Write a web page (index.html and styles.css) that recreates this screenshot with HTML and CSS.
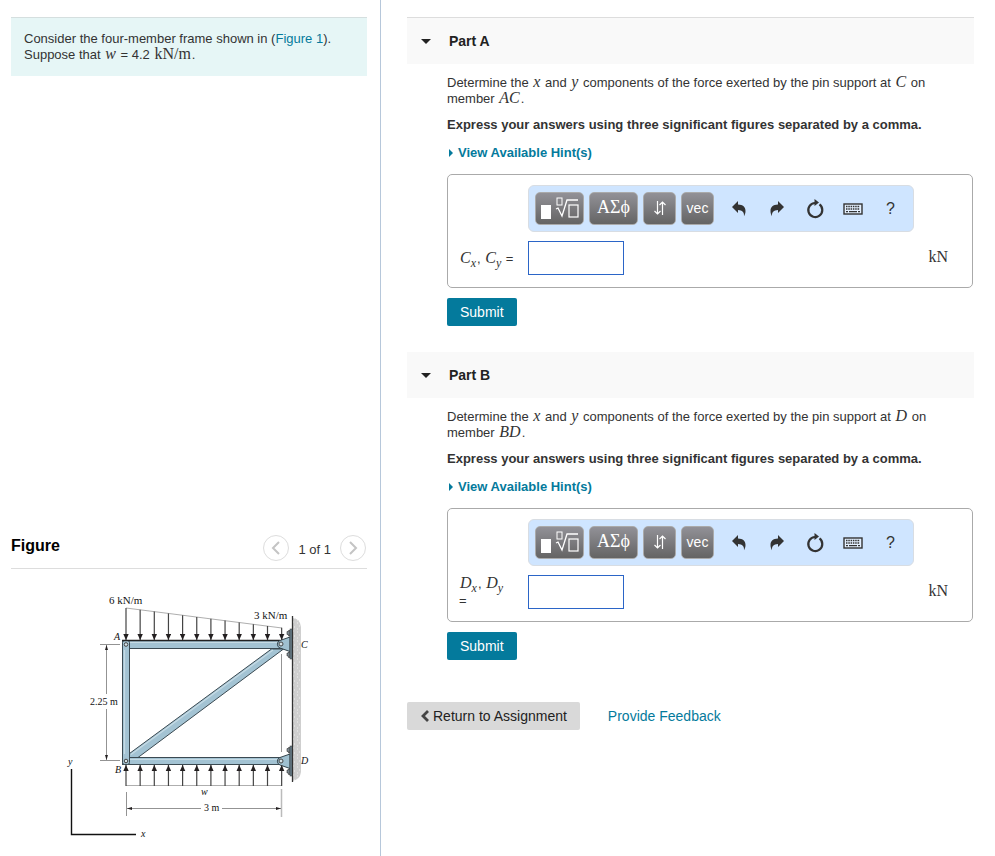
FILE: index.html
```
<!DOCTYPE html>
<html lang="en">
<head>
    <meta charset="UTF-8">
    <meta name="viewport" content="width=device-width, initial-scale=1.0">
    <title>Four-member frame</title>
    <link rel="stylesheet" href="styles.css">
</head>
<body>

<!-- Shared icons -->
<svg class="sprite" aria-hidden="true">
    <symbol id="icon-template" viewBox="0 0 40 24">
        <rect x="1" y="9" width="10" height="14" fill="#fff"/>
        <rect x="17" y="2" width="5" height="7" fill="none" stroke="#fff"/>
        <path d="M16 13l2-1 4 8 5-16h11" fill="none" stroke="#fff" stroke-width="1.3"/>
        <rect x="29" y="9" width="9" height="12" fill="none" stroke="#fff" stroke-width="1.2"/>
    </symbol>
    <symbol id="icon-arrows" viewBox="0 0 14 16">
        <path d="M4.500 1v13M1.500 11l3 3 3-3M9.500 15V2M6.500 5l3-3 3 3" fill="none" stroke="#fff" stroke-width="1.200"/>
    </symbol>
    <symbol id="icon-undo" viewBox="0 0 16 16">
        <path d="M1 6L7 0v3.500c5 .2 7.500 2.500 7.500 6.500 0 2-.6 3.700-1.500 5.200.3-4-1.600-6-6-6.200v3z" fill="#333"/>
    </symbol>
    <symbol id="icon-redo" viewBox="0 0 16 16">
        <path d="M15 6L9 0v3.500C4 3.700 1.500 6 1.500 10c0 2 .6 3.700 1.500 5.200-.3-4 1.600-6 6-6.200v3z" fill="#333"/>
    </symbol>
    <symbol id="icon-reset" viewBox="0 0 18 20">
        <path d="M13.500 5.400A7 7 0 1 1 9 4" fill="none" stroke="#333" stroke-width="2.200"/>
        <path d="M8.500 0l4.500 3.500-4.500 3.500z" fill="#333"/>
    </symbol>
    <symbol id="icon-keyboard" viewBox="0 0 20 12">
        <rect x="1" y="1" width="18" height="10" fill="#e4f0ff" stroke="#333" stroke-width="1.400"/>
        <path d="M3 3.500h14M3 6h14" stroke="#333" stroke-width="1.300" stroke-dasharray="1.500 .8"/>
        <path d="M3 8.700h2M6 8.700h8M15 8.700h2" stroke="#333" stroke-width="1.300"/>
    </symbol>
</svg>

<div class="page">
    <aside class="sidebar">
        <div class="prompt">
            Consider the four-member frame shown in (<a href="#figure">Figure 1</a>). Suppose that <i class="math">w</i> = 4.2 <span class="math">kN/m</span>.
        </div>

        <section class="figure" id="figure">
            <div class="figure-head">
                <h2>Figure</h2>
                <div class="pager">
                    <button class="round" aria-label="Previous figure"><svg width="10" height="14" viewBox="0 0 10 14"><path d="M8 1L2 7l6 6" fill="none" stroke="#c4c4c4" stroke-width="2"/></svg></button>
                    <span>1 of 1</span>
                    <button class="round" aria-label="Next figure"><svg width="10" height="14" viewBox="0 0 10 14"><path d="M2 1l6 6-6 6" fill="none" stroke="#c4c4c4" stroke-width="2"/></svg></button>
                </div>
            </div>

            <svg class="drawing" viewBox="11 569 356 287" role="img" aria-label="Four-member frame ABCD">
                <defs>
                    <marker id="head" viewBox="0 0 6 6" refX="6" refY="3" markerWidth="6" markerHeight="6" markerUnits="userSpaceOnUse" orient="auto-start-reverse">
                        <path d="M0 0.300l6 2.700-6 2.700z" fill="#231f20"/>
                    </marker>
                    <marker id="dim" viewBox="0 0 5 4" refX="5" refY="2" markerWidth="5" markerHeight="4" markerUnits="userSpaceOnUse" orient="auto-start-reverse">
                        <path d="M0 .5l5 1.500-5 1.500z" fill="#231f20"/>
                    </marker>
                    <pattern id="concrete" width="8" height="9" patternUnits="userSpaceOnUse">
                        <rect width="8" height="9" fill="#cfcfcf"/>
                        <path d="M1 2h1M5 1h1M3 5h1M6 6h1M1 8h1" stroke="#f1f1f1"/>
                    </pattern>
                    <symbol id="support" viewBox="0 0 20 32" overflow="visible">
                        <path d="M15 2.500h-1.500v1h-1.500v3h1.500v1.500h1.500zM15 24h-1.500v1h-1.500v3h1.500v1.500h1.500z" fill="#7d8b93" stroke="#333" stroke-width=".6"/>
                        <path d="M5 12.500L15 9v14.500L5 20a4 4 0 0 1 0-7.500z" fill="#9fc0d0" stroke="#33444c"/>
                        <rect x="15" y="1" width="2" height="30" fill="#6d8592" stroke="#333" stroke-width=".5"/>
                        <circle cx="6" cy="16" r="2" fill="#d6e4ea" stroke="#444"/>
                    </symbol>
                </defs>

                <!-- wall -->
                <path d="M292 618q8 0 9 9v145q-1 8-9 9z" fill="url(#concrete)"/>
                <path d="M292.500 616v166" stroke="#333" stroke-width="1.300"/>

                <!-- members -->
                <g fill="#a3c3d3" stroke="#3b4a52">
                    <path d="M129.500 753.500L271.500 649h12L138 757.500h-8.500z"/>
                    <rect x="122.500" y="640.500" width="160" height="8"/>
                    <rect x="122.500" y="757.500" width="160" height="7"/>
                    <rect x="122.500" y="640.500" width="7" height="124" rx="2"/>
                </g>
                <path d="M131 754.500L273 650M130 642.500h148M130 759.500h148M124.500 650v104" stroke="#c6dbe5" stroke-width="1.200"/>
                <path d="M122 640.500h158" stroke="#222" stroke-width="1.500"/>
                <g fill="#d6e4ea" stroke="#444">
                    <circle cx="126" cy="644.500" r="1.800"/>
                    <circle cx="126" cy="761" r="1.800"/>
                </g>
                <use href="#support" x="275" y="628" width="20" height="32"/>
                <use href="#support" x="275" y="745" width="20" height="32"/>

                <!-- loads -->
                <path d="M126 608l156 20M126 785.500h156" stroke="#999" stroke-width=".8"/>
                <g id="loads" stroke="#444" stroke-width="1.200"></g>

                <!-- dimensions -->
                <g stroke="#777" stroke-width=".8">
                    <path d="M100 644.500h20M100 760.500h20M126.500 792v24M281.500 654v98"/>
                    <path d="M281.500 789v28" stroke="#bbb" stroke-width="1.500"/>
                    <path d="M106.500 694v-49" marker-end="url(#dim)"/>
                    <path d="M106.500 709v51" marker-end="url(#dim)"/>
                    <path d="M201 808.500h-74" marker-end="url(#dim)"/>
                    <path d="M222 808.500h59" marker-end="url(#dim)"/>
                </g>
                <path d="M71.500 769v65.500h64.500" fill="none" stroke="#111" stroke-width="1.400"/>

                <g class="labels">
                    <text class="load" x="109" y="604">6 kN/m</text>
                    <text class="load" x="254" y="619">3 kN/m</text>
                    <text x="90" y="705">2.25 m</text>
                    <text x="204" y="811">3 m</text>
                    <g font-style="italic">
                        <text x="114" y="640">A</text>
                        <text x="115" y="773">B</text>
                        <text x="301" y="648">C</text>
                        <text x="301" y="764">D</text>
                        <text x="201" y="795">w</text>
                        <text x="68" y="765">y</text>
                        <text x="141" y="837">x</text>
                    </g>
                </g>
            </svg>
        </section>
    </aside>

    <main class="content">
        <section class="part">
            <button class="part-head part-first"><span class="caret"></span>Part A</button>
            <div class="part-body">
                <p>Determine the <i class="math">x</i> and <i class="math">y</i> components of the force exerted by the pin support at <i class="math">C</i> on member <i class="math">AC</i>.</p>
                <p><b>Express your answers using three significant figures separated by a comma.</b></p>
                <a class="hints" href="#"><span class="hint-caret"></span>View Available Hint(s)</a>
                <div class="answer">
                    <div class="toolbar">
                        <button class="key wide" aria-label="Templates"><svg width="40" height="24"><use href="#icon-template"/></svg></button>
                        <button class="key wide symbols">ΑΣϕ</button>
                        <button class="key" aria-label="Arrows"><svg width="14" height="16"><use href="#icon-arrows"/></svg></button>
                        <button class="key">vec</button>
                        <div class="tools">
                            <button class="tool" aria-label="Undo"><svg width="16" height="16"><use href="#icon-undo"/></svg></button>
                            <button class="tool" aria-label="Redo"><svg width="16" height="16"><use href="#icon-redo"/></svg></button>
                            <button class="tool" aria-label="Reset"><svg width="18" height="20"><use href="#icon-reset"/></svg></button>
                            <button class="tool" aria-label="Keyboard"><svg width="20" height="12"><use href="#icon-keyboard"/></svg></button>
                            <button class="tool">?</button>
                        </div>
                    </div>
                    <label for="answerA"><i class="math">C<sub>x</sub></i>, <i class="math">C<sub>y</sub></i> =</label>
                    <input type="text" id="answerA">
                    <span class="unit math">kN</span>
                </div>
                <button class="submit">Submit</button>
            </div>
        </section>

        <section class="part">
            <button class="part-head"><span class="caret"></span>Part B</button>
            <div class="part-body">
                <p>Determine the <i class="math">x</i> and <i class="math">y</i> components of the force exerted by the pin support at <i class="math">D</i> on member <i class="math">BD</i>.</p>
                <p><b>Express your answers using three significant figures separated by a comma.</b></p>
                <a class="hints" href="#"><span class="hint-caret"></span>View Available Hint(s)</a>
                <div class="answer">
                    <div class="toolbar">
                        <button class="key wide" aria-label="Templates"><svg width="40" height="24"><use href="#icon-template"/></svg></button>
                        <button class="key wide symbols">ΑΣϕ</button>
                        <button class="key" aria-label="Arrows"><svg width="14" height="16"><use href="#icon-arrows"/></svg></button>
                        <button class="key">vec</button>
                        <div class="tools">
                            <button class="tool" aria-label="Undo"><svg width="16" height="16"><use href="#icon-undo"/></svg></button>
                            <button class="tool" aria-label="Redo"><svg width="16" height="16"><use href="#icon-redo"/></svg></button>
                            <button class="tool" aria-label="Reset"><svg width="18" height="20"><use href="#icon-reset"/></svg></button>
                            <button class="tool" aria-label="Keyboard"><svg width="20" height="12"><use href="#icon-keyboard"/></svg></button>
                            <button class="tool">?</button>
                        </div>
                    </div>
                    <label for="answerB"><i class="math">D<sub>x</sub></i>, <i class="math">D<sub>y</sub></i><br>=</label>
                    <input type="text" id="answerB">
                    <span class="unit math">kN</span>
                </div>
                <button class="submit">Submit</button>
            </div>
        </section>

        <div class="actions">
            <button class="return"><svg width="9" height="12" viewBox="0 0 9 12"><path d="M8 1L3 6l5 5" fill="none" stroke="#444" stroke-width="2.800"/></svg>Return to Assignment</button>
            <a href="#">Provide Feedback</a>
        </div>
    </main>
</div>

<script src="script.js"></script>
</body>
</html>
```
FILE: styles.css
```
* {
    box-sizing: border-box;
}
body {
    margin: 0;
    font-family: Arial, "Liberation Sans", sans-serif;
    font-size: 13px;
    line-height: 16px;
    color: #333;
    background: #fff;
}
a {
    color: #047a9c;
    text-decoration: none;
}
button {
    font-family: inherit;
    font-size: 14px;
    padding: 0;
    border: none;
    background: none;
    cursor: pointer;
}
.sprite {
    display: none;
}
.math {
    padding: 0 1px;
    font-family: "Liberation Serif", serif;
    font-size: 16px;
    line-height: 0;
}
.math sub {
    font-size: 12px;
    line-height: 0;
}
.page {
    display: grid;
    grid-template-columns: 381px minmax(0, 1fr);
    min-height: 100vh;
}

/* Left column */
.sidebar {
    display: flex;
    flex-direction: column;
    justify-content: space-between;
    padding: 17px 13px 0 11px;
    border-right: 1px solid #b6c7da;
}
.prompt {
    padding: 13px;
    border-top: 1px solid #d5dfdf;
    background: #e6f6f6;
}
.figure-head {
    display: flex;
    justify-content: space-between;
    align-items: center;
    padding-bottom: 7px;
    border-bottom: 1px solid #ddd;
}
.figure-head h2 {
    margin: 0 0 4px;
    font-size: 16px;
    line-height: 20px;
    color: #000;
}
.pager {
    display: flex;
    align-items: center;
    gap: 9px;
    padding-right: 1px;
}
.pager span {
    padding-top: 3px;
}
.round {
    display: flex;
    align-items: center;
    justify-content: center;
    width: 26px;
    height: 26px;
    border: 1px solid #ddd;
    border-radius: 50%;
}
.drawing {
    display: block;
    width: 100%;
}
.labels {
    font-family: "Liberation Serif", serif;
    font-size: 10px;
    fill: #111;
}
.labels .load {
    font-size: 11px;
}

/* Right column */
.content {
    padding: 17px 21px 0 26px;
}
.part {
    margin-bottom: 26px;
}
.part-head {
    display: flex;
    align-items: center;
    gap: 18px;
    width: 100%;
    height: 46px;
    padding-left: 14px;
    background: #f9f9f9;
    font-weight: bold;
    color: #222;
}
.part-first {
    height: 47px;
    border-top: 1px solid #ddd;
}
.caret {
    border: 5px solid transparent;
    border-top-color: #222;
    border-bottom: none;
}
.part-body {
    padding: 11px 0 0 40px;
}
.part-body p {
    margin: 0 0 10px;
    padding-right: 32px;
}
.hints {
    display: flex;
    align-items: center;
    gap: 5px;
    margin: 12px 0 13px;
    padding-left: 2px;
    font-weight: bold;
}
.hint-caret {
    border: 4px solid transparent;
    border-left-color: #047a9c;
    border-right: none;
}
.answer {
    display: grid;
    grid-template-columns: 69px minmax(0, 1fr) auto;
    align-items: center;
    row-gap: 9px;
    margin-right: 1px;
    padding: 10px 23px 12px 11px;
    border: 1px solid #aaa;
    border-radius: 5px;
}
.answer label {
    line-height: 17px;
}
.unit {
    padding-bottom: 3px;
}
.toolbar {
    grid-column: 2 / 4;
    display: flex;
    align-items: center;
    gap: 5px;
    width: 386px;
    height: 47px;
    padding: 0 6px;
    border: 1px solid #d8dde3;
    border-radius: 6px;
    background: #cfe5ff;
}
.key {
    display: flex;
    align-items: center;
    justify-content: center;
    width: 33px;
    height: 33px;
    padding-bottom: 2px;
    border: 1px solid #aaa;
    border-radius: 5px;
    background: linear-gradient(#929197, #646464);
    color: #fff;
}
.wide {
    width: 49px;
}
.symbols {
    font-family: "Liberation Serif", serif;
    font-size: 18px;
}
.tools {
    display: flex;
    gap: 5px;
    margin-left: 3px;
}
.tool {
    display: flex;
    align-items: center;
    justify-content: center;
    width: 33px;
    height: 33px;
    font-size: 16px;
    color: #333;
}
.answer input {
    width: 96px;
    height: 34px;
    padding: 0 6px;
    border: 1px solid #2b65c7;
    font-size: 16px;
}
.submit {
    display: block;
    margin-top: 10px;
    padding: 6px 13px;
    border-radius: 2px;
    background: #047a9c;
    line-height: 16px;
    color: #fff;
}
.actions {
    display: flex;
    align-items: center;
    gap: 28px;
    margin-top: 42px;
    font-size: 14px;
}
.return {
    display: flex;
    align-items: center;
    gap: 4px;
    padding: 6px 13px;
    border-radius: 2px;
    background: #d9d9d9;
    line-height: 16px;
    color: #222;
}
```
FILE: script.js
```
// distributed loads: 12 arrows above member AC and 12 below member BD
const loads = document.getElementById('loads');

function addArrow(x, from, to) {
    const line = document.createElementNS('http://www.w3.org/2000/svg', 'path');
    line.setAttribute('d', `M${x} ${from}V${to}`);
    line.setAttribute('marker-end', 'url(#head)');
    loads.appendChild(line);
}

for (let i = 0; i < 12; i++) {
    const x = 126 + i * 14.15;
    addArrow(x, 608 + i * 1.8, 640);
    addArrow(x, 786, 765);
}
```
